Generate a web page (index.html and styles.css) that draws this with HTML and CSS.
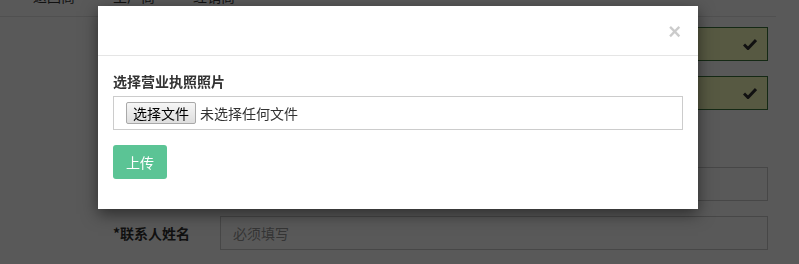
FILE: index.html
```html
<!DOCTYPE html>
<html lang="zh-CN">
<head>
<meta charset="utf-8">
<title>上传营业执照</title>
<link rel="stylesheet" href="styles.css">
</head>
<body>
<div class="page">
  <nav class="topnav">
    <span class="nav-item">返回商</span>
    <span class="nav-item">生产商</span>
    <span class="nav-item">经销商</span>
  </nav>
  <form class="form">
    <div class="row">
      <label class="row-label">*公司名称</label>
      <div class="row-field">
        <div class="input success">已填写
          <svg class="check" viewBox="0 0 14 12" width="14" height="12"><path d="M1 6.5 L5 10.5 L13 2" fill="none" stroke="currentColor" stroke-width="3"/></svg>
        </div>
      </div>
    </div>
    <div class="row">
      <label class="row-label">*公司地址</label>
      <div class="row-field">
        <div class="input success">已填写
          <svg class="check" viewBox="0 0 14 12" width="14" height="12"><path d="M1 6.5 L5 10.5 L13 2" fill="none" stroke="currentColor" stroke-width="3"/></svg>
        </div>
      </div>
    </div>
    <div class="row short">
      <label class="row-label">*营业执照</label>
      <div class="row-field"><span class="link-text">上传</span></div>
    </div>
    <div class="row">
      <label class="row-label">*联系电话</label>
      <div class="row-field"><div class="input placeholder">必须填写</div></div>
    </div>
    <div class="row">
      <label class="row-label">*联系人姓名</label>
      <div class="row-field"><div class="input placeholder">必须填写</div></div>
    </div>
  </form>
</div>

<div class="backdrop"></div>

<div class="modal">
  <div class="modal-header">
    <span class="close">&times;</span>
  </div>
  <div class="modal-body">
    <div class="group">
      <div class="label">选择营业执照照片</div>
      <div class="file-box">
        <span class="file-btn">选择文件</span>
        <span class="file-name">未选择任何文件</span>
      </div>
    </div>
    <div class="group">
      <span class="btn-upload">上传</span>
    </div>
  </div>
</div>
</body>
</html>
```

FILE: styles.css
```css
html, body {
  margin: 0;
  padding: 0;
  background: #fff;
  font-family: "Noto Sans CJK SC", "Liberation Sans", sans-serif;
  color: #333;
  font-size: 14px;
  overflow: hidden;
  height: 264px;
}

.page {
  width: 799px;
}

.topnav {
  display: flex;
  margin-top: -14px;
  height: 20px;
  line-height: 20px;
  padding: 0 0 10px 33px;
  margin-right: 23px;
  border-bottom: 1px solid #e5e5e5;
}

.nav-item {
  width: 80px;
  color: #333;
}

.form {
  padding-top: 10px;
}

.row {
  display: flex;
  align-items: center;
  margin-bottom: 15px;
}

.row.short {
  height: 27px;
}

.row-label {
  width: 205px;
  box-sizing: border-box;
  padding-right: 15px;
  text-align: right;
  font-weight: bold;
  color: #333;
}

.row-field {
  padding-left: 15px;
  width: 548px;
}

.input {
  position: relative;
  height: 34px;
  box-sizing: border-box;
  border: 1px solid #ccc;
  padding: 6px 12px;
  line-height: 20px;
  background: #fff;
  color: #555;
}

.input.placeholder {
  color: #999;
}

.input.success {
  background: #faffbd;
  border-color: #3c763d;
}

.check {
  position: absolute;
  right: 10px;
  top: 10px;
  color: #333;
}

.link-text {
  color: #337ab7;
}

.backdrop {
  position: fixed;
  inset: 0;
  background: rgba(0, 0, 0, 0.65);
}

.modal {
  position: absolute;
  left: 98px;
  top: 6px;
  width: 600px;
  background: #fff;
  box-shadow: 0 5px 15px rgba(0, 0, 0, 0.5);
}

.modal-header {
  height: 50px;
  box-sizing: border-box;
  border-bottom: 1px solid #e5e5e5;
  display: flex;
  justify-content: flex-end;
  align-items: center;
  padding: 0 17px 0 15px;
}

.close {
  font-family: "Liberation Sans", sans-serif;
  font-size: 22px;
  font-weight: bold;
  color: #000;
  opacity: 0.2;
  line-height: 1;
  margin-top: 2px;
}

.modal-body {
  padding: 15px;
}

.group {
  margin-bottom: 15px;
}

.label {
  font-weight: bold;
  line-height: 20px;
  margin-bottom: 5px;
  color: #333;
}

.file-box {
  height: 34px;
  box-sizing: border-box;
  border: 1px solid #ccc;
  padding: 0 12px;
  display: flex;
  align-items: center;
  color: #333;
}

.file-btn {
  display: inline-block;
  height: 22px;
  box-sizing: border-box;
  line-height: 20px;
  padding: 0 6px;
  border: 1px solid #a9a9a9;
  border-radius: 2px;
  background: linear-gradient(#f6f6f6, #dedede);
  font-size: 14px;
  color: #000;
  margin-right: 4px;
}

.file-name {
  font-size: 14px;
  color: #333;
}

.btn-upload {
  display: inline-block;
  width: 54px;
  height: 34px;
  box-sizing: border-box;
  line-height: 34px;
  text-align: center;
  background: #5bc495;
  color: #fff;
  border-radius: 3px;
  font-size: 14px;
}
```
